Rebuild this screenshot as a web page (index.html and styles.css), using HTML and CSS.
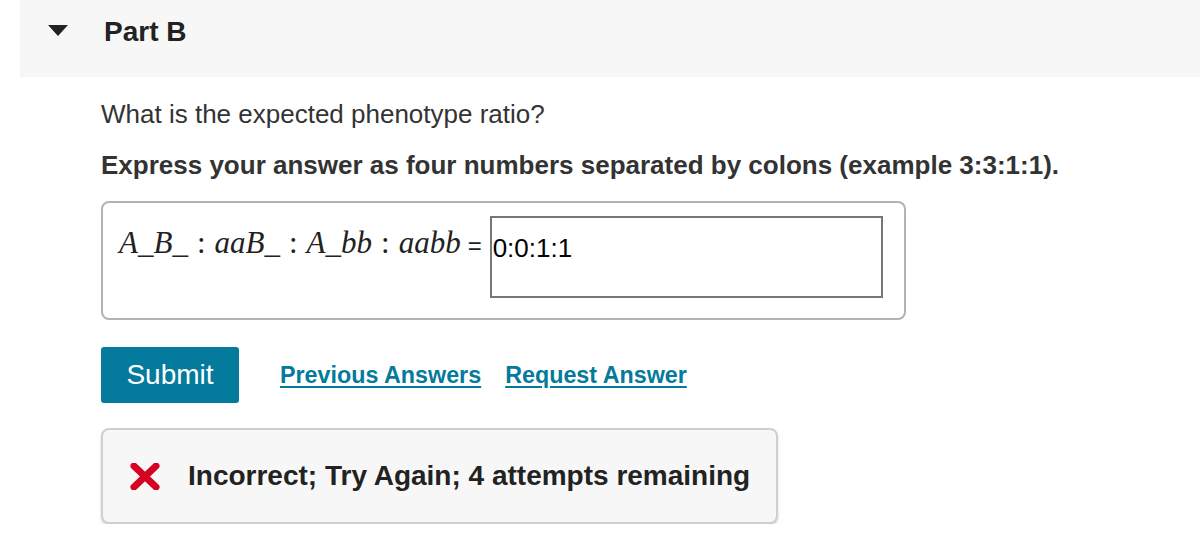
FILE: index.html
```html
<!DOCTYPE html>
<html lang="en">
<head>
	<meta charset="UTF-8">
	<title>Part B</title>
	<link rel="stylesheet" href="styles.css">
</head>
<body>
	<div class="part-head">
		<span class="caret"></span>
		<h2 class="part-title">Part B</h2>
	</div>

	<div class="part-body">
		<p class="question">What is the expected phenotype ratio?</p>
		<p class="instr">Express your answer as four numbers separated by colons (example 3:3:1:1).</p>

		<div class="answer-box">
			<span class="math">
				<i>A</i>_<i>B</i>_<span class="op">:</span><i>aaB</i>_<span class="op">:</span><i>A</i>_<i>bb</i><span class="op">:</span><i>aabb</i>
			</span>
			<span class="eq">=</span>
			<div class="input">0:0:1:1</div>
		</div>

		<div class="actions">
			<button class="submit">Submit</button>
			<a href="#" class="link">Previous Answers</a>
			<a href="#" class="link">Request Answer</a>
		</div>

		<div class="feedback">
			<svg class="xmark" width="30" height="27" viewBox="0 0 30 27">
				<path d="M4 3 L26 24 M26 3 L4 24" stroke="#d50321" stroke-width="7" stroke-linecap="round"/>
			</svg>
			<span class="fb-text">Incorrect; Try Again; 4 attempts remaining</span>
		</div>
	</div>
</body>
</html>
```

FILE: styles.css
```css
*{
	margin: 0;
	padding: 0;
	box-sizing: border-box;
}
body{
	font-family: "Liberation Sans", Arial, sans-serif;
	color: #333;
	background: #fff;
	width: 1200px;
}
.part-head{
	margin-left: 20px;
	height: 77px;
	background: #f7f7f7;
	display: flex;
	align-items: flex-start;
	padding-top: 16px;
}
.caret{
	width: 0;
	height: 0;
	margin: 9px 0 0 28px;
	border-left: 10.5px solid transparent;
	border-right: 10.5px solid transparent;
	border-top: 11px solid #222;
}
.part-title{
	margin-left: 36px;
	font-size: 28px;
	font-weight: bold;
	color: #222;
	line-height: 32px;
}
.part-body{
	padding-left: 101px;
}
.question{
	margin-top: 22px;
	font-size: 26px;
	line-height: 30px;
}
.instr{
	margin-top: 21px;
	font-size: 26px;
	font-weight: bold;
	line-height: 30px;
}
.answer-box{
	margin-top: 21px;
	width: 805px;
	height: 119px;
	border: 2px solid #b3b3b3;
	border-radius: 8px;
	display: flex;
	align-items: flex-start;
	padding: 13px 0 0 16px;
}
.math{
	font-family: "Liberation Serif", "Times New Roman", serif;
	font-size: 31px;
	color: #222;
	line-height: 36px;
	margin-top: 9px;
	white-space: nowrap;
}
.math i{
	font-style: italic;
}
.op{
	font-style: normal;
	margin: 0 9px;
}
.eq{
	font-size: 24px;
	color: #222;
	margin: 16px 8px 0 7px;
	line-height: 28px;
}
.input{
	width: 393px;
	height: 82px;
	border: 2px solid #777;
	font-size: 26px;
	color: #000;
	line-height: 30px;
	padding: 15px 0 0 1px;
}
.actions{
	margin-top: 27px;
	display: flex;
	align-items: center;
}
.submit{
	width: 138px;
	height: 56px;
	background: #047a9c;
	color: #fff;
	border: none;
	border-radius: 3px;
	font-family: "Liberation Sans", Arial, sans-serif;
	font-size: 28px;
}
.link{
	color: #047a9c;
	font-weight: bold;
	font-size: 23.3px;
	text-decoration: underline;
	text-decoration-thickness: 2px;
	text-underline-offset: 3px;
	margin-left: 41px;
}
.link + .link{
	margin-left: 24px;
}
.feedback{
	margin-top: 25px;
	width: 677px;
	height: 96px;
	background: #f7f7f7;
	border: 2px solid #cfcfcf;
	border-radius: 8px;
	box-shadow: 0 2px 3px rgba(0,0,0,0.15);
	display: flex;
	align-items: center;
	padding-left: 27px;
}
.xmark{
	flex: none;
}
.fb-text{
	margin-left: 28px;
	font-size: 28px;
	font-weight: bold;
	color: #222;
}
```
